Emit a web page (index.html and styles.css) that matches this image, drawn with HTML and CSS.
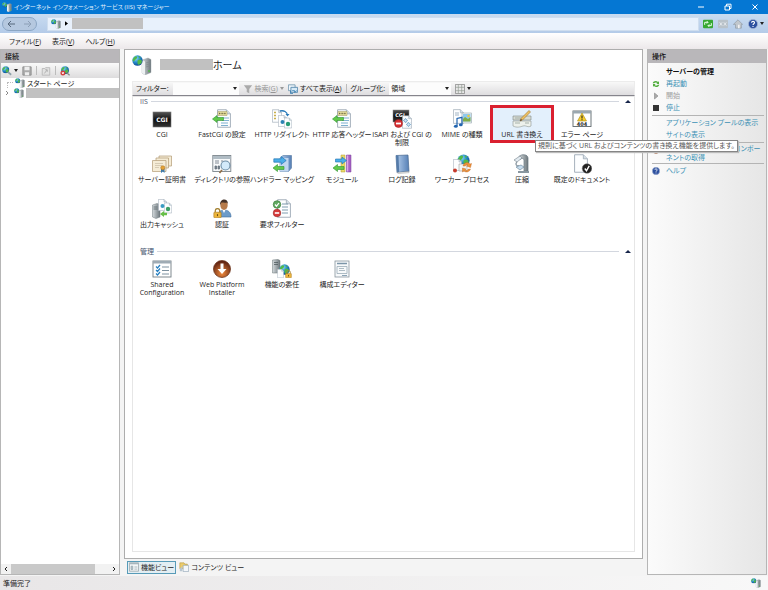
FILE: index.html
```html
<!DOCTYPE html>
<html lang="ja">
<head>
<meta charset="utf-8">
<title>インターネット インフォメーション サービス (IIS) マネージャー</title>
<link rel="stylesheet" href="styles.css">
</head>
<body>
<svg class="defs" aria-hidden="true">
  <defs>
    <linearGradient id="gSteel" x1="0" x2="1"><stop offset="0" stop-color="#d4dadd"/><stop offset="1" stop-color="#6d777c"/></linearGradient>
    <radialGradient id="gGlobe" cx=".35" cy=".3" r=".8"><stop offset="0" stop-color="#8fd8f4"/><stop offset=".5" stop-color="#2389c9"/><stop offset="1" stop-color="#0b3d85"/></radialGradient>
    <radialGradient id="gOrange" cx=".5" cy=".75" r=".7"><stop offset="0" stop-color="#f08a3c"/><stop offset="1" stop-color="#5c2010"/></radialGradient>
    <linearGradient id="gBlue" x1="0" x2="1"><stop offset="0" stop-color="#b3cdec"/><stop offset="1" stop-color="#557fb5"/></linearGradient>
    <linearGradient id="gBlack" x1="0" x2="0" y1="0" y2="1"><stop offset="0" stop-color="#555"/><stop offset=".5" stop-color="#111"/><stop offset="1" stop-color="#333"/></linearGradient>
  </defs>
  <symbol id="globe" viewBox="0 0 10 10"><circle cx="5" cy="5" r="4.7" fill="url(#gGlobe)"/><path d="M2 2c2-1.500 3-.5 2.500.8S2.500 4.500 2 5.500.6 5 .6 4zM5.500 4.500c2-.8 3.500 0 3.500 1.500S7 9 6 8.800 4.500 5.500 5.500 4.500zM6 1l2 1.200-1.500.8z" fill="#52b848"/></symbol>
  <symbol id="server" viewBox="0 0 20 20"><path d="M10 5l6-2 3 1.500v13L13 20l-3-2z" fill="url(#gSteel)" stroke="#9aa3a6" stroke-width=".4"/><path d="M10 5l3 1.500V20l-3-2z" fill="#edf1f2"/><path d="M14 8l4-1.200M14 10l4-1.200M14 12l4-1.200" stroke="#7f888c" stroke-width=".7"/><circle cx="17" cy="16" r="1" fill="#54b848"/><use href="#globe" x="0" y="0" width="11" height="11"/></symbol>
  <symbol id="doc" viewBox="0 0 12 16"><path d="M.5.500h7.500L11.500 4v11.500H.5z" fill="#fdfeff" stroke="#93a1ae" stroke-width=".7"/><path d="M8 .5V4h3.500" fill="#d5dee6" stroke="#93a1ae" stroke-width=".6"/></symbol>
  <symbol id="arrowL" viewBox="0 0 12 8"><path d="M.5 4l4.500-3.500v2H11.500v3H5v2z" fill="#62c94a" stroke="#2e9430" stroke-width=".6"/></symbol>
  <symbol id="arrowR" viewBox="0 0 12 8"><path d="M11.500 4L7 .5v2H.5v3H7v2z" fill="#4aaee8" stroke="#2471b0" stroke-width=".6"/></symbol>
  <symbol id="gear" viewBox="0 0 8 8"><circle cx="4" cy="4" r="2.400" fill="#d5e6f2" stroke="#6ea2c8" stroke-width="1.200"/><path d="M4 0v1.500M4 6.500V8M0 4h1.500M6.500 4H8M1.200 1.200l1 1M5.800 5.800l1 1M6.800 1.200l-1 1M1.200 6.800l1-1" stroke="#6ea2c8" stroke-width="1.100"/></symbol>
  <symbol id="lock" viewBox="0 0 8 9"><path d="M2 4V2.500a2 2 0 014 0V4" fill="none" stroke="#a58335" stroke-width="1.100"/><rect x=".7" y="3.800" width="6.600" height="5" rx=".6" fill="#edb63b" stroke="#a4711c" stroke-width=".5"/><path d="M4 5.500v1.800" stroke="#704b12"/></symbol>

  <symbol id="i-fast" viewBox="0 0 20 20"><use href="#doc" x="5" y="0" width="14" height="19"/><path d="M6 2.500h9v4H6z" fill="#efe6a3" stroke="#9b925a" stroke-width=".5"/><path d="M7 4.500h7" stroke="#6c6842" stroke-width="1.400" stroke-dasharray="1 .6"/><path d="M10 9h7M10 11.500h7M9 14h7M9 16.500h7" stroke="#7fb0d0"/><use href="#arrowL" x="0" y="6" width="12" height="8"/></symbol>
  <symbol id="i-redir" viewBox="0 0 20 20"><use href="#doc" x="0" y="0" width="10" height="14"/><path d="M2 3.500h2M2 6.500h2M2 9.500h2" stroke="#c9b04b" stroke-width="1.400"/><path d="M8 2c4-1 7 1 7.500 4" fill="none" stroke="#2779b8" stroke-width="1.300"/><path d="M13.500 5h4l-2 2.500z" fill="#2779b8"/><use href="#doc" x="6" y="6" width="9" height="12"/><use href="#doc" x="12" y="8" width="8" height="12"/><circle cx="10.500" cy="13" r="2" fill="#2c83b5"/><circle cx="16" cy="15" r="2.200" fill="#269b75"/></symbol>
  <symbol id="i-mime" viewBox="0 0 20 20"><use href="#doc" x="1" y="0" width="11" height="15"/><path d="M3 4h4M3 6h4" stroke="#8aa2b5" stroke-width=".8"/><rect x="10" y="4" width="9.500" height="10" fill="#f1f4f4" stroke="#90a2aa" stroke-width=".6"/><path d="M11 5h7.500v7.500H11z" fill="#8dc9ed"/><path d="M11 12.500V10l2-2 3 2 2.500-2v4.500z" fill="#82ad46"/><circle cx="16.500" cy="7" r="1.200" fill="#f2ca36"/><path d="M5 17V9.500l5-1.200v7.200" fill="none" stroke="#2265b0" stroke-width="1.200"/><ellipse cx="3.800" cy="17.200" rx="1.900" ry="1.500" fill="#2265b0"/><ellipse cx="8.800" cy="15.800" rx="1.900" ry="1.500" fill="#2265b0"/></symbol>
  <symbol id="i-rewrite" viewBox="0 0 20 20"><path d="M1 7h18v4H1z" fill="#d7dbd4" stroke="#818984" stroke-width=".6"/><path d="M1 12h18v5c-3 2-5-1-8 0s-6 2-10 0z" fill="#edf1ec" stroke="#8d9690" stroke-width=".6"/><path d="M3 9h7M3 14h5M13 14h4" stroke="#a5b0a8"/><path d="M8 12l1-2.500L17 1.500l1.500 1.500-8 8z" fill="#efc261" stroke="#997130" stroke-width=".6"/><path d="M8 12l1-2 1 1z" fill="#333"/></symbol>
  <symbol id="i-cert" viewBox="0 0 20 20"><g fill="#f5ecd6" stroke="#b39c75" stroke-width=".7"><path d="M7 2h12.500v10H7z"/><path d="M4 4h12.500v10H4z"/><path d="M.5 6.500H14v11H.5z"/></g><path d="M3 9.500h8M3 11.500h7M3 13.500h4" stroke="#c9bda5" stroke-width=".7"/><path d="M9 14v5l1.800-1.400L12.500 19v-5z" fill="#397ab1"/><circle cx="10.800" cy="13.800" r="2.100" fill="#e4a236" stroke="#aa7222" stroke-width=".5"/></symbol>
  <symbol id="i-dir" viewBox="0 0 20 20"><rect x=".8" y="1.500" width="18" height="16" fill="#f7f9fa" stroke="#7b858c" stroke-width=".9"/><path d="M1 2h17.500v3H1z" fill="#b0bcc4"/><path d="M3 7h4M3 9h4M3 12h1.500v3H3zM6 12h1.500v3H6zM9 7h2" stroke="#64707b" fill="#7b8791" stroke-width=".8"/><path d="M10 16l-2.500 3" stroke="#927148" stroke-width="1.700"/><circle cx="13.500" cy="11.500" r="4.500" fill="#d3eafa" stroke="#6d8da5" stroke-width="1.100"/></symbol>
  <symbol id="i-handler" viewBox="0 0 20 20"><path d="M8 4l3-2.500h8.500V14l-3 3.500H8z" fill="url(#gBlue)" stroke="#5377a1" stroke-width=".6"/><path d="M8 4h8.500v13.500H8z" fill="#c1d6ef"/><use href="#arrowR" x="1" y="2" width="14" height="9"/><use href="#arrowL" x="0" y="10" width="13" height="8"/></symbol>
  <symbol id="i-module" viewBox="0 0 20 20"><path d="M9 1h4v17H9z" fill="#edda67" stroke="#ad9835" stroke-width=".5"/><path d="M14.500 1h4.500v17h-4.500z" fill="#a661c4" stroke="#78409a" stroke-width=".5"/><path d="M15 1.500h1.300v16H15z" fill="#dba6e8"/><use href="#arrowR" x="3" y="2" width="12" height="9"/><use href="#arrowL" x="0" y="10" width="13" height="8"/></symbol>
  <symbol id="i-log" viewBox="0 0 20 20"><path d="M4 1.500L16 1l1 16.500-12 1z" fill="url(#gBlue)" stroke="#49698f" stroke-width=".7"/><path d="M4 1.500h2.500L7.200 18 5 18.500z" fill="#547ba9"/><path d="M5 18.500l12-1v1.200l-11 1z" fill="#eee" stroke="#777" stroke-width=".3"/></symbol>
  <symbol id="i-worker" viewBox="0 0 20 20"><use href="#globe" x="5" y="0" width="13" height="13"/><use href="#doc" x="1" y="5" width="9" height="12"/><path d="M7 10h8v7H7z" fill="#f6f6f4" stroke="#8b8b8b" stroke-width=".5"/><circle cx="3" cy="16.500" r="2" fill="#c63a2c"/><path d="M11 12a4 4 0 017-2l1.500-.5-1 4-4-1.500 1.500-.6c-1-1.200-2.500-.6-2.700.6zM18.500 15a4 4 0 01-6.500 2l-1.500 1V14l3.500 1-1 1c1 1 2.600.7 3-.7z" fill="#ef943a" stroke="#b85d19" stroke-width=".4"/></symbol>
  <symbol id="i-comp" viewBox="0 0 20 20"><path d="M7 2.500c3-3 9-2 9 1.500v13h-4V6c0-2-3-2-4-.5z" fill="url(#gSteel)" stroke="#657580" stroke-width=".7"/><path d="M2 6l6-4 2 2-5 4z" fill="#e2eaf0" stroke="#74828b" stroke-width=".6"/><path d="M5 8c-2 2-1 4 2 4" fill="none" stroke="#8a98a2" stroke-width="1.300"/><path d="M4 13l5-2 3 2-4 3z" fill="#c6dced" stroke="#617e94" stroke-width=".6"/><path d="M6 17h11v2H6z" fill="#8997a0"/></symbol>
  <symbol id="i-default" viewBox="0 0 20 20"><use href="#doc" x="2" y="0" width="14" height="19"/><circle cx="15" cy="14.500" r="4.800" fill="#222" stroke="#777" stroke-width=".5"/><path d="M12.800 14.500l1.700 2.300 2.700-5" fill="none" stroke="#fff" stroke-width="1.400"/></symbol>
  <symbol id="i-cache" viewBox="0 0 20 20"><path d="M.5 6L5 4.500l3 1V18l-4 1.500L.5 18z" fill="url(#gSteel)" stroke="#707c80" stroke-width=".5"/><path d="M1.500 8h4M1.500 10h4" stroke="#59666b" stroke-width=".8"/><use href="#doc" x="6" y="0" width="9" height="12"/><use href="#doc" x="12" y="3" width="8" height="12"/><circle cx="10.500" cy="7" r="2" fill="#389bc2"/><circle cx="16" cy="10" r="2.200" fill="#3c9f65"/><path d="M8 15l4-3v1.800h3v2.400h-3V18z" fill="#67bf48"/></symbol>
  <symbol id="i-auth" viewBox="0 0 20 20"><path d="M6 18c0-5 2-7 6-7s7 2 7 7z" fill="#6c9bc9" stroke="#3f6f9f" stroke-width=".6"/><path d="M10 10l2 4 2-4z" fill="#fff"/><ellipse cx="12" cy="6" rx="3.700" ry="5" fill="#b77b4b"/><path d="M8 6c0-7 8-7 8-1l-1-1.500c-2 .5-4 0-5.500 0z" fill="#453228"/><use href="#lock" x="1" y="9" width="9" height="10"/></symbol>
  <symbol id="i-filter" viewBox="0 0 20 20"><use href="#doc" x="5" y="0" width="14" height="19"/><path d="M10 5h6M10 8h6M10 11h6M10 14h6" stroke="#7f9caf"/><circle cx="5" cy="5.500" r="3.800" fill="#62a961" stroke="#327632" stroke-width=".6"/><path d="M3 5.500l1.500 1.700L7 4" fill="none" stroke="#fff" stroke-width="1.200"/><circle cx="5" cy="14" r="3.800" fill="#d73a3a" stroke="#942222" stroke-width=".6"/><path d="M2.800 14h4.400" stroke="#fff" stroke-width="1.600"/></symbol>
  <symbol id="i-shared" viewBox="0 0 20 20"><rect x="1" y="2" width="18" height="16" fill="#fff" stroke="#717d84" stroke-width=".9"/><path d="M1 2h18v2.500H1z" fill="#9fabb4"/><path d="M10 8h7M10 11.500h7M10 15h7" stroke="#7c91a0"/><path d="M4 7.500l1.500 1.500L8 6M4 11l1.500 1.500L8 9.500M4 14.500L5.500 16 8 13" fill="none" stroke="#267fc0" stroke-width="1.200"/></symbol>
  <symbol id="i-wpi" viewBox="0 0 20 20"><circle cx="10" cy="10" r="8.500" fill="url(#gOrange)" stroke="#6e3720" stroke-width=".8"/><path d="M8.500 4.500h3V10h3L10 15l-4.500-5h3z" fill="#fff"/></symbol>
  <symbol id="i-deleg" viewBox="0 0 20 20"><path d="M.5 1L6 .5l2 1V14H.5z" fill="url(#gSteel)" stroke="#687477" stroke-width=".5"/><path d="M2 3.500h4M2 5.500h4" stroke="#505c60" stroke-width=".8"/><use href="#globe" x="7" y="5" width="11" height="11"/><use href="#doc" x="5" y="10" width="7" height="9"/><use href="#lock" x="13" y="11" width="7" height="8"/></symbol>
  <symbol id="i-editor" viewBox="0 0 20 20"><rect x="3" y="2" width="14" height="16" fill="#f7f9fa" stroke="#87949d" stroke-width=".8"/><path d="M5 4.500h10" stroke="#7b95a8" stroke-width="1.500"/><path d="M5 7.500h10v7H5zM7 9.500h5M7 11.500h6" fill="none" stroke="#9aacb8" stroke-width=".8"/><path d="M10 16.500h5" stroke="#8ba4b6"/></symbol>

  <symbol id="i-help" viewBox="0 0 12 12"><circle cx="6" cy="6" r="5.500" fill="#2d509f" stroke="#a9b8d5" stroke-width=".8"/><path d="M4.200 4.500c.2-2.300 3.700-2 3.600 0-.1 1.200-1.700 1.200-1.800 2.600M6 8.300v1.300" fill="none" stroke="#fff" stroke-width="1.300"/></symbol>
  <symbol id="i-conn" viewBox="0 0 12 12"><use href="#globe" width="9" height="9"/><path d="M7 7l4 3.500" stroke="#8ca0a9" stroke-width="2"/></symbol>
  <symbol id="i-disc" viewBox="0 0 12 12"><use href="#globe" x="1" width="10" height="10"/><path d="M8 8l3.500 3" stroke="#888" stroke-width="1.500"/><circle cx="3.500" cy="8.500" r="3" fill="#d33f3d"/><path d="M2.300 7.300l2.400 2.400M4.700 7.300L2.300 9.700" stroke="#fff"/></symbol>
  <symbol id="i-save" viewBox="0 0 12 12"><path d="M1 1h10v10H1z" fill="#ababab" stroke="#8b8b8b"/><path d="M3 1h6v4H3zM3.500 7.500h5V11h-5z" fill="#eee"/></symbol>
  <symbol id="i-up" viewBox="0 0 12 12"><path d="M1.500 3h3l1-1h5v9h-9z" fill="#e2e2e2" stroke="#b5b5b5"/><path d="M4 9l3-4M5 4.500h2.500V7" fill="none" stroke="#aaa"/></symbol>
  <symbol id="i-funnel" viewBox="0 0 12 12"><path d="M1 1.500h10L7.500 6v5l-3-1.500V6z" fill="#aaa"/></symbol>
  <symbol id="i-showall" viewBox="0 0 12 12"><path d="M.5 1h8v7h-8z" fill="#eef5fa" stroke="#7095ae"/><path d="M3.500 4h8v6h-8z" fill="#d7eaf6" stroke="#4e83a8"/><path d="M5 8h3v2l2.500-2M3 8v3.500h3" fill="none" stroke="#347bb0"/></symbol>
  <symbol id="i-grid" viewBox="0 0 12 12"><path d="M.5.500h11v11H.5z" fill="#e8e8e8" stroke="#8c8c8c"/><path d="M.5 4h11M.5 8h11M4 .5v11M8 .5v11" stroke="#929c92" stroke-width=".8"/></symbol>
  <symbol id="i-view" viewBox="0 0 12 12"><path d="M.5 1h11v10H.5z" fill="#f4f7f8" stroke="#9aa6ab"/><path d="M1 2h10" stroke="#a5b4bc" stroke-width="1.500"/><path d="M2.500 5h2v4h-2zM6.500 6H10M6.500 8.500H10" fill="#bac7cd" stroke="#8c9ea7" stroke-width=".8"/></symbol>
  <symbol id="i-content" viewBox="0 0 12 12"><path d="M1 1h5l1 1.500h3V8H1z" fill="#edcc6c" stroke="#b49744" stroke-width=".7"/><path d="M5 4h6.500v7.500H5z" fill="#f4f7fa" stroke="#869dae" stroke-width=".7"/><path d="M1 8l3-3v6H1z" fill="#b8c6d1"/></symbol>
  <symbol id="i-cycle" viewBox="0 0 12 12"><path d="M1 5c1-4 6-4.500 8-2l1.500-1v4H6.500L8 4.500c-1.500-1.500-4-.8-4.700.5zM11 7c-1 4-6 4.500-8 2l-1.500 1V6h4L4 7.500c1.500 1.500 4 .8 4.700-.5z" fill="#52ae3e"/></symbol>
  <symbol id="i-refresh" viewBox="0 0 12 12"><rect y="1" width="12" height="10" rx="1" fill="#36a832"/><path d="M2 7V4h4M4.500 2.500L6 4 4.500 5.500M10 5v3H6M7.500 6.500L6 8l1.500 1.500" fill="none" stroke="#e7ffe4" stroke-width="1.200"/></symbol>
  <symbol id="i-stop" viewBox="0 0 12 12"><rect y="1" width="12" height="10" rx="1" fill="#b9c2c9"/><path d="M2 4l3 4M5 4L2 8M7 4l3 4M10 4L7 8" stroke="#e9edf0"/></symbol>
  <symbol id="i-home" viewBox="0 0 12 12"><path d="M.5 6.500L6 1l5.500 5.500H10V11H3V6.500z" fill="#c1c7cd" stroke="#8f9aa4" stroke-width=".8"/><path d="M6 7h2v4H6z" fill="#f2f2f2"/></symbol>
</svg>

<div class="window">
  <header class="titlebar">
    <svg class="ic10"><use href="#server"/></svg>
    <h1 class="title">インターネット インフォメーション サービス (IIS) マネージャー</h1>
    <div class="winbtns">
      <button aria-label="最小化"><svg viewBox="0 0 8 8"><path d="M1 4h6"/></svg></button>
      <button aria-label="元に戻す"><svg viewBox="0 0 8 8"><path d="M1 3h4.500v4H1zM2.500 3V1.200H7V5.500H5.500"/></svg></button>
      <button aria-label="閉じる"><svg viewBox="0 0 8 8"><path d="M1.500 1.500l5 5M6.500 1.500l-5 5"/></svg></button>
    </div>
  </header>

  <nav class="navbar">
    <div class="history">
      <button aria-label="戻る"><svg viewBox="0 0 10 10"><path d="M9 5H2M5 2L2 5l3 3"/></svg></button>
      <button aria-label="進む" class="dim"><svg viewBox="0 0 10 10"><path d="M1 5h7M5 2l3 3-3 3"/></svg></button>
    </div>
    <div class="address">
      <svg class="ic10"><use href="#server"/></svg>
      <svg class="crumb" viewBox="0 0 4 6"><path d="M0 0l4 3-4 3z"/></svg>
      <span class="mask mask-address"></span>
    </div>
    <div class="navtools">
      <button aria-label="更新"><svg class="ic10"><use href="#i-refresh"/></svg></button>
      <button aria-label="中止"><svg class="ic10"><use href="#i-stop"/></svg></button>
      <button aria-label="ホーム"><svg class="ic10"><use href="#i-home"/></svg></button>
      <button aria-label="ヘルプ"><svg class="ic10"><use href="#i-help"/></svg><i class="down"></i></button>
    </div>
  </nav>

  <div class="menubar">
    <button><span>ファイル(<u>F</u>)</span></button>
    <button><span>表示(<u>V</u>)</span></button>
    <button><span>ヘルプ(<u>H</u>)</span></button>
  </div>

  <div class="workspace">
    <aside class="pane connections">
      <h2 class="pane-head">接続</h2>
      <div class="conn-tools">
        <button aria-label="接続"><svg class="ic10"><use href="#i-conn"/></svg><i class="down"></i></button>
        <button aria-label="保存"><svg class="ic10"><use href="#i-save"/></svg></button>
        <span class="sep"></span>
        <button aria-label="上へ"><svg class="ic10"><use href="#i-up"/></svg></button>
        <span class="sep"></span>
        <button aria-label="切断"><svg class="ic10"><use href="#i-disc"/></svg></button>
      </div>
      <ul class="tree">
        <li><span class="branch"></span><svg class="ic10"><use href="#server"/></svg><span>スタート ページ</span></li>
        <li><svg class="expand" viewBox="0 0 6 6"><path d="M2 1l2 2-2 2"/></svg><svg class="ic10"><use href="#server"/></svg><span class="mask mask-tree"></span></li>
      </ul>
      <div class="hscroll">
        <button aria-label="左へ"><svg viewBox="0 0 6 6"><path d="M4 1L2 3l2 2"/></svg></button>
        <span class="track"><span class="thumb"></span></span>
        <button aria-label="右へ"><svg viewBox="0 0 6 6"><path d="M2 1l2 2-2 2"/></svg></button>
      </div>
    </aside>

    <main class="center">
      <section class="home">
        <div class="home-head">
          <svg class="ic20"><use href="#server"/></svg>
          <h2><span class="mask mask-home"></span>ホーム</h2>
        </div>
        <div class="filterbar">
          <label for="filter">フィルター:</label>
          <span class="combo filter-combo"><input id="filter" type="text"><i class="down"></i></span>
          <button class="dim"><svg class="ic10"><use href="#i-funnel"/></svg><span>検索(<u>G</u>)</span><i class="down"></i></button>
          <button><svg class="ic10"><use href="#i-showall"/></svg><span>すべて表示(<u>A</u>)</span></button>
          <span class="sep"></span>
          <label for="group">グループ化:</label>
          <span class="combo group-combo"><select id="group"><option>領域</option></select><i class="down"></i></span>
          <button aria-label="表示形式"><svg class="ic10"><use href="#i-grid"/></svg><i class="down"></i></button>
        </div>
        <div class="features">
          <section class="group">
            <h3>IIS</h3>
            <ul class="grid">
              <li><svg viewBox="0 0 20 20"><rect x="1" y="3" width="18" height="15" fill="url(#gBlack)" stroke="#777" stroke-width=".6"/><text x="10" y="12.500" class="icon-text light" font-size="6">CGI</text></svg>CGI</li>
              <li><svg><use href="#i-fast"/></svg>FastCGI の設定</li>
              <li><svg><use href="#i-redir"/></svg>HTTP リダイレクト</li>
              <li><svg><use href="#i-fast"/></svg>HTTP 応答ヘッダー</li>
              <li><svg viewBox="0 0 20 20"><rect x="1" y="1" width="16" height="12" fill="url(#gBlack)" stroke="#888" stroke-width=".5"/><text x="8" y="8" class="icon-text light" font-size="5">CGI</text><use href="#doc" x="10" y="6" width="10" height="14"/><use href="#gear" x="11" y="9" width="5" height="5"/><use href="#gear" x="14" y="13" width="5" height="5"/><circle cx="6.500" cy="14.500" r="4" fill="#d52f32" stroke="#981a1d" stroke-width=".5"/><path d="M4 14.500h5" stroke="#fff" stroke-width="1.800"/></svg>ISAPI および CGI の<br>制限</li>
              <li><svg><use href="#i-mime"/></svg>MIME の種類</li>
              <li class="selected"><svg><use href="#i-rewrite"/></svg>URL 書き換え<span class="tooltip" role="tooltip">規則に基づく URL およびコンテンツの書き換え機能を提供します。</span></li>
              <li><svg viewBox="0 0 20 20"><rect x="1" y="2" width="18" height="15.500" fill="#fff" stroke="#5c666b" stroke-width=".9"/><path d="M1 2h18v2.500H1z" fill="#9ba8b0"/><path d="M10 4l4.500 8h-9z" fill="#f7cd2c" stroke="#a98b12" stroke-width=".6"/><path d="M10 6.500v3M10 10.200v1" stroke="#222" stroke-width="1.100"/><text x="10" y="16.600" class="icon-text" font-size="5">404</text></svg>エラー ページ</li>
              <li><svg><use href="#i-cert"/></svg>サーバー証明書</li>
              <li><svg><use href="#i-dir"/></svg>ディレクトリの参照</li>
              <li><svg><use href="#i-handler"/></svg>ハンドラー マッピング</li>
              <li><svg><use href="#i-module"/></svg>モジュール</li>
              <li><svg><use href="#i-log"/></svg>ログ記録</li>
              <li><svg><use href="#i-worker"/></svg>ワーカー プロセス</li>
              <li><svg><use href="#i-comp"/></svg>圧縮</li>
              <li><svg><use href="#i-default"/></svg>既定のドキュメント</li>
              <li><svg><use href="#i-cache"/></svg>出力キャッシュ</li>
              <li><svg><use href="#i-auth"/></svg>認証</li>
              <li><svg><use href="#i-filter"/></svg>要求フィルター</li>
            </ul>
          </section>
          <section class="group">
            <h3>管理</h3>
            <ul class="grid">
              <li><svg><use href="#i-shared"/></svg>Shared<br>Configuration</li>
              <li><svg><use href="#i-wpi"/></svg>Web Platform<br>Installer</li>
              <li><svg><use href="#i-deleg"/></svg>機能の委任</li>
              <li><svg><use href="#i-editor"/></svg>構成エディター</li>
            </ul>
          </section>
        </div>
      </section>
      <div class="viewtabs">
        <button class="active"><svg class="ic10"><use href="#i-view"/></svg>機能ビュー</button>
        <button><svg class="ic10"><use href="#i-content"/></svg>コンテンツ ビュー</button>
      </div>
    </main>

    <aside class="pane actions">
      <h2 class="pane-head">操作</h2>
      <div class="action-list">
        <h3>サーバーの管理</h3>
        <a href="#restart"><svg class="ic8"><use href="#i-cycle"/></svg>再起動</a>
        <a class="disabled" aria-disabled="true"><svg class="ic8" viewBox="0 0 8 8"><path d="M2.500 1l3.500 3-3.500 3z" fill="#aaa" stroke="#888" stroke-width=".6"/></svg>開始</a>
        <a href="#stop"><svg class="ic8" viewBox="0 0 8 8"><path d="M1 1h6v6H1z" fill="#333"/></svg>停止</a>
        <hr>
        <a href="#pools">アプリケーション プールの表示</a>
        <a href="#sites">サイトの表示</a>
        <hr>
        <a href="#components" class="two-line"><svg class="ic8"><use href="#i-wpi"/></svg>新しい Web Platform コンポーネントの取得</a>
        <hr>
        <a href="#help"><svg class="ic8"><use href="#i-help"/></svg>ヘルプ</a>
      </div>
    </aside>
  </div>

  <footer class="statusbar"><span>準備完了</span><svg class="ic10"><use href="#server"/></svg></footer>
</div>
</body>
</html>
```
FILE: styles.css
```css
* { box-sizing: border-box; }

body {
  margin: 0;
  font: 7px/9px "Open Sans", "Noto Sans CJK JP", sans-serif;
  font-feature-settings: "palt";
  color: #1c1c1c;
}

h1, h2, h3, ul { margin: 0; padding: 0; font-size: 7px; font-weight: 400; list-style: none; }

button, input, select {
  font: inherit;
  font-feature-settings: inherit;
  color: inherit;
  background: none;
  border: 0;
  padding: 0;
  margin: 0;
}

button { display: inline-flex; align-items: center; gap: 2px; white-space: nowrap; }
a { color: #3c91b5; text-decoration: none; }
svg { display: block; flex: none; }

.defs { position: absolute; width: 0; height: 0; }
.icon-text { font-family: "DejaVu Sans", sans-serif; font-weight: 700; text-anchor: middle; fill: #222; }
.icon-text.light { fill: #fff; }
.ic8 { width: 8px; height: 8px; }
.ic10 { width: 10px; height: 10px; }
.ic20 { width: 20px; height: 20px; }
.mask { display: block; background: #c1c1c1; }
.dim { color: #969696; }
.sep { width: 1px; height: 9px; background: #bcbcbc; }

.down {
  flex: none;
  border: 2px solid transparent;
  border-top: 3px solid #222;
  border-bottom: 0;
}

.dim .down { border-top-color: #999; }

.window { min-height: 100vh; display: flex; flex-direction: column; background: #f4f4f4; }

/* Title bar */
.titlebar { display: flex; align-items: center; height: 14px; padding-left: 2px; gap: 2px; background: #0577d3; color: #e8f3fd; }
.title { flex: 1; font-size: 6px; white-space: nowrap; }
.winbtns { display: flex; }
.winbtns button { width: 27px; height: 14px; justify-content: center; }
.winbtns svg { width: 8px; height: 8px; fill: none; stroke: #fff; stroke-width: 1; }

/* Navigation */
.navbar { display: flex; align-items: center; height: 19px; padding: 0 4px 0 2px; background: linear-gradient(#c9dcf1, #b4cbe8); }
.history { display: flex; align-items: center; justify-content: space-around; width: 35px; height: 14px; margin-right: 10px; border: 1px solid #8ba6c4; border-radius: 7px; background: #b5c8df; }
.history svg { width: 10px; height: 10px; fill: none; stroke: #56687d; stroke-width: 1; }
.history .dim svg { stroke: #8c9fb6; }
.address { flex: 1; display: flex; align-items: center; gap: 4px; height: 14px; padding-left: 3px; border: 1px solid #cfdeef; background: #e8f1fc; }
.crumb { width: 3px; height: 5px; }
.mask-address { width: 71px; height: 11px; }
.navtools { display: flex; gap: 5px; padding-left: 4px; }

/* Menu */
.menubar { display: flex; align-items: center; gap: 11px; height: 16px; padding-left: 9px; background: linear-gradient(#fff, #ece8ea); }

/* Panes */
.workspace { flex: 1; display: grid; grid-template-columns: 120px 1fr 120px; gap: 4px; padding: 0 1px 1px 0; background: #f4f4f4; }
.pane { display: flex; flex-direction: column; border: 1px solid #b6b6b6; min-width: 0; }
.pane-head { height: 13px; padding-left: 4px; line-height: 13px; background: #b9b7ba; color: #111; font-weight: 500; }

.connections { background: #fff; }
.conn-tools { display: flex; align-items: center; gap: 4px; height: 15px; padding-left: 1px; background: linear-gradient(#fafafa, #dddcdd); }
.tree { flex: 1; }
.tree li { display: flex; align-items: center; gap: 2px; height: 10px; padding-left: 3px; }
.branch { width: 6px; height: 6px; margin-left: 3px; align-self: flex-end; border-left: 1px dotted #bbb; border-top: 1px dotted #bbb; }
.expand { width: 6px; height: 6px; margin-right: 2px; fill: none; stroke: #888; stroke-width: 1; }
.mask-tree { flex: 1; height: 10px; }
.hscroll { display: flex; height: 10px; background: #f2f2f2; }
.hscroll button { width: 10px; justify-content: center; }
.hscroll svg { width: 6px; height: 6px; fill: none; stroke: #222; stroke-width: 1; }
.track { flex: 1; display: flex; }
.thumb { width: 86%; background: #c9c9c9; }

/* Centre */
.center { display: flex; flex-direction: column; min-width: 0; }
.home { flex: 1; display: flex; flex-direction: column; padding: 0 7px 6px 7px; border: 1px solid #adadad; background: #fff; }
.home-head { display: flex; align-items: center; gap: 8px; height: 31px; padding-bottom: 2px; }
.home-head h2 { display: flex; align-items: center; font-size: 10px; line-height: 14px; }
.mask-home { width: 53px; height: 11px; }

.filterbar { display: flex; align-items: center; gap: 4px; height: 15px; padding-left: 3px; border: 1px solid #ececec; border-bottom: 1px solid #85848c; background: linear-gradient(#f8f8f8, #dedddf); white-space: nowrap; }
.combo { display: flex; align-items: center; height: 12px; padding: 0 2px; background: #fcfcfc; }
.combo input, .combo select { flex: 1; min-width: 0; height: 12px; appearance: none; outline: 0; }
.filter-combo { width: 66px; }
.group-combo { width: 62px; }

.features { flex: 1; box-shadow: inset 0 0 0 1px #e6e6e6; }
.group { height: 150px; }
.group h3 { display: flex; align-items: center; gap: 3px; height: 11px; padding: 0 4px 0 8px; color: #46546e; }
.group h3::before { content: ""; order: 1; flex: 1; height: 1px; margin-right: 3px; background: #d3d7df; }
.group h3::after { content: ""; order: 2; border: 3px solid transparent; border-top: 0; border-bottom: 3px solid #17254a; }
.grid { display: grid; grid-template-columns: repeat(auto-fill, 60px); grid-auto-rows: 45px; }
.grid li { position: relative; display: flex; flex-direction: column; align-items: center; padding-top: 2px; line-height: 8px; text-align: center; white-space: nowrap; }
.grid li > svg { width: 20px; height: 20px; margin-bottom: 2px; }
.grid .selected { height: 34px; background: #e3f0fc; outline: 3px solid #da2030; outline-offset: -1px; }

.tooltip { position: absolute; z-index: 2; left: 43px; top: 33px; padding: 1px 2px; border: 1px solid #858585; background: #fff; color: #555; box-shadow: 1px 1px 1px #bbb; }

.viewtabs { display: flex; align-items: center; gap: 1px; height: 16px; padding-left: 3px; }
.viewtabs button { height: 13px; padding: 0 1px; border: 1px solid transparent; }
.viewtabs .active { border-color: #579bb8; background: #e3eef3; }

/* Actions */
.actions { background: linear-gradient(90deg, #fbfbfb, #e6e6e6); }
.action-list { padding: 3px 0 0 4px; }
.action-list h3, .action-list a { display: block; position: relative; padding-left: 14px; line-height: 12px; }
.action-list h3 { color: #111; font-weight: 600; }
.action-list .ic8 { position: absolute; left: 0; top: 2px; }
.action-list .two-line { line-height: 9px; }
.action-list .disabled { color: #a0a0a0; }
.action-list hr { height: 1px; margin: 1px 2px 1px 0; border: 0; background: #b4b4b4; }

.statusbar { display: flex; align-items: center; justify-content: space-between; height: 14px; padding: 0 7px 0 3px; background: linear-gradient(90deg, #e8e6e7, #f8f8f8); }
```
